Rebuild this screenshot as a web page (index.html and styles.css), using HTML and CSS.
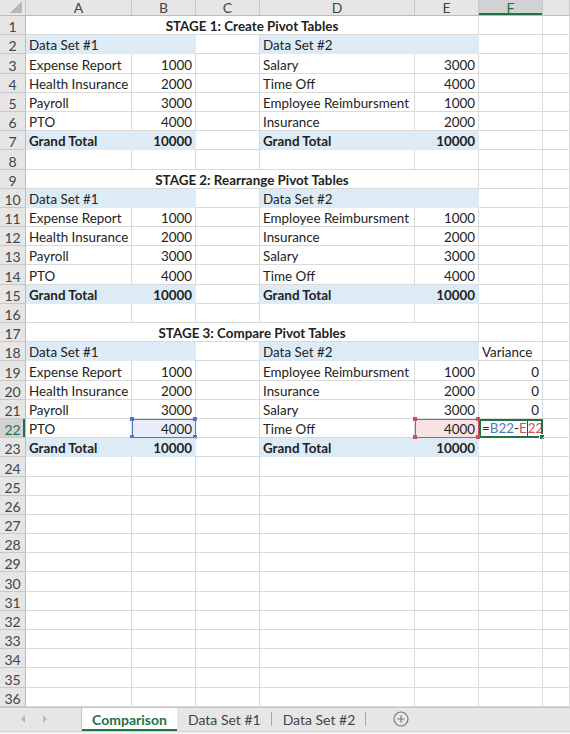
FILE: index.html
```html
<!DOCTYPE html>
<html lang="en">
<head>
    <meta charset="UTF-8">
    <meta name="viewport" content="width=device-width, initial-scale=1.0">
    <title>Comparison - Pivot Tables</title>
    <link rel="stylesheet" href="styles.css">
</head>
<body>
    <!-- worksheet grid -->
    <table class="sheet">
        <colgroup>
            <col class="c-rh">
            <col class="c-a">
            <col class="c-b">
            <col class="c-c">
            <col class="c-d">
            <col class="c-e">
            <col class="c-f">
            <col class="c-g">
        </colgroup>
        <thead>
            <tr>
                <th class="corner"><span class="tri"></span></th>
                <th>A</th>
                <th>B</th>
                <th>C</th>
                <th>D</th>
                <th>E</th>
                <th class="col-hl">F</th>
                <th></th>
            </tr>
        </thead>
        <tbody>
            <!-- stage 1 -->
            <tr><th>1</th><td colspan="5" class="title">STAGE 1: Create Pivot Tables</td><td></td><td></td></tr>
            <tr><th>2</th><td class="fill">Data Set #1</td><td class="fill"></td><td></td><td class="fill">Data Set #2</td><td class="fill"></td><td></td><td></td></tr>
            <tr><th>3</th><td>Expense Report</td><td class="num">1000</td><td></td><td>Salary</td><td class="num">3000</td><td></td><td></td></tr>
            <tr><th>4</th><td>Health Insurance</td><td class="num">2000</td><td></td><td>Time Off</td><td class="num">4000</td><td></td><td></td></tr>
            <tr><th>5</th><td>Payroll</td><td class="num">3000</td><td></td><td>Employee Reimbursment</td><td class="num">1000</td><td></td><td></td></tr>
            <tr><th>6</th><td>PTO</td><td class="num">4000</td><td></td><td>Insurance</td><td class="num">2000</td><td></td><td></td></tr>
            <tr><th>7</th><td class="fill b">Grand Total</td><td class="fill b num">10000</td><td></td><td class="fill b">Grand Total</td><td class="fill b num">10000</td><td></td><td></td></tr>
            <tr><th>8</th><td></td><td></td><td></td><td></td><td></td><td></td><td></td></tr>

            <!-- stage 2 -->
            <tr><th>9</th><td colspan="5" class="title">STAGE 2: Rearrange Pivot Tables</td><td></td><td></td></tr>
            <tr><th>10</th><td class="fill">Data Set #1</td><td class="fill"></td><td></td><td class="fill">Data Set #2</td><td class="fill"></td><td></td><td></td></tr>
            <tr><th>11</th><td>Expense Report</td><td class="num">1000</td><td></td><td>Employee Reimbursment</td><td class="num">1000</td><td></td><td></td></tr>
            <tr><th>12</th><td>Health Insurance</td><td class="num">2000</td><td></td><td>Insurance</td><td class="num">2000</td><td></td><td></td></tr>
            <tr><th>13</th><td>Payroll</td><td class="num">3000</td><td></td><td>Salary</td><td class="num">3000</td><td></td><td></td></tr>
            <tr><th>14</th><td>PTO</td><td class="num">4000</td><td></td><td>Time Off</td><td class="num">4000</td><td></td><td></td></tr>
            <tr><th>15</th><td class="fill b">Grand Total</td><td class="fill b num">10000</td><td></td><td class="fill b">Grand Total</td><td class="fill b num">10000</td><td></td><td></td></tr>
            <tr><th>16</th><td></td><td></td><td></td><td></td><td></td><td></td><td></td></tr>

            <!-- stage 3 -->
            <tr><th>17</th><td colspan="5" class="title">STAGE 3: Compare Pivot Tables</td><td></td><td></td></tr>
            <tr><th>18</th><td class="fill">Data Set #1</td><td class="fill"></td><td></td><td class="fill">Data Set #2</td><td class="fill"></td><td>Variance</td><td></td></tr>
            <tr><th>19</th><td>Expense Report</td><td class="num">1000</td><td></td><td>Employee Reimbursment</td><td class="num">1000</td><td class="num">0</td><td></td></tr>
            <tr><th>20</th><td>Health Insurance</td><td class="num">2000</td><td></td><td>Insurance</td><td class="num">2000</td><td class="num">0</td><td></td></tr>
            <tr><th>21</th><td>Payroll</td><td class="num">3000</td><td></td><td>Salary</td><td class="num">3000</td><td class="num">0</td><td></td></tr>
            <tr>
                <th class="row-hl">22</th>
                <td>PTO</td>
                <td class="num ref ref-blue">4000<i class="h tl"></i><i class="h tr"></i><i class="h bl"></i><i class="h br"></i></td>
                <td></td>
                <td>Time Off</td>
                <td class="num ref ref-red">4000<i class="h tl"></i><i class="h tr"></i><i class="h bl"></i><i class="h br"></i></td>
                <td class="edit">=<span class="blue">B22</span>-<span class="red">E</span><span class="caret"></span><span class="red">22</span><i class="fill-handle"></i></td>
                <td></td>
            </tr>
            <tr><th>23</th><td class="fill b">Grand Total</td><td class="fill b num">10000</td><td></td><td class="fill b">Grand Total</td><td class="fill b num">10000</td><td></td><td></td></tr>

            <!-- empty rows -->
            <tr><th>24</th><td></td><td></td><td></td><td></td><td></td><td></td><td></td></tr>
            <tr><th>25</th><td></td><td></td><td></td><td></td><td></td><td></td><td></td></tr>
            <tr><th>26</th><td></td><td></td><td></td><td></td><td></td><td></td><td></td></tr>
            <tr><th>27</th><td></td><td></td><td></td><td></td><td></td><td></td><td></td></tr>
            <tr><th>28</th><td></td><td></td><td></td><td></td><td></td><td></td><td></td></tr>
            <tr><th>29</th><td></td><td></td><td></td><td></td><td></td><td></td><td></td></tr>
            <tr><th>30</th><td></td><td></td><td></td><td></td><td></td><td></td><td></td></tr>
            <tr><th>31</th><td></td><td></td><td></td><td></td><td></td><td></td><td></td></tr>
            <tr><th>32</th><td></td><td></td><td></td><td></td><td></td><td></td><td></td></tr>
            <tr><th>33</th><td></td><td></td><td></td><td></td><td></td><td></td><td></td></tr>
            <tr><th>34</th><td></td><td></td><td></td><td></td><td></td><td></td><td></td></tr>
            <tr><th>35</th><td></td><td></td><td></td><td></td><td></td><td></td><td></td></tr>
            <tr><th>36</th><td></td><td></td><td></td><td></td><td></td><td></td><td></td></tr>
        </tbody>
    </table>

    <!-- sheet tabs -->
    <div class="tabs">
        <div class="nav">
            <svg width="6" height="8" viewBox="0 0 6 8"><path d="M5 0 L1 4 L5 8 Z" fill="#b9b9b9"/></svg>
            <svg width="6" height="8" viewBox="0 0 6 8"><path d="M1 0 L5 4 L1 8 Z" fill="#b9b9b9"/></svg>
        </div>
        <div class="tab active">Comparison</div>
        <div class="tab">Data Set #1</div>
        <span class="sep"></span>
        <div class="tab">Data Set #2</div>
        <span class="sep"></span>
        <div class="add">
            <svg width="16" height="16" viewBox="0 0 16 16">
                <circle cx="8" cy="8" r="7" fill="none" stroke="#7a7a7a" stroke-width="1.2"/>
                <path d="M8 4.5 V11.5 M4.5 8 H11.5" stroke="#7a7a7a" stroke-width="1.2"/>
            </svg>
        </div>
    </div>
    <div class="status"></div>
</body>
</html>
```

FILE: styles.css
```css
body {
    margin: 0;
    font-family: Lato, Calibri, "Noto Sans", sans-serif;
    font-size: 14px;
    color: #222;
    background: #fff;
    overflow: hidden;
}

/* grid */
.sheet {
    border-collapse: separate;
    border-spacing: 0;
    table-layout: fixed;
    width: 570px;
}
.c-rh { width: 26px; }
.c-a { width: 106px; }
.c-b { width: 64px; }
.c-c { width: 64px; }
.c-d { width: 155px; }
.c-e { width: 64px; }
.c-f { width: 64px; }
.c-g { width: 27px; }

.sheet td {
    height: 19.2px;
    box-sizing: border-box;
    padding: 0 3px;
    border-right: 1px solid #dadada;
    border-bottom: 1px solid #dadada;
    font-size: 13.4px;
    white-space: nowrap;
    overflow: visible;
    line-height: 15px;
    vertical-align: bottom;
    position: relative;
}
.sheet thead th {
    height: 16px;
    box-sizing: border-box;
    padding: 0;
    background: #e6e6e6;
    font-weight: normal;
    color: #444;
    border-right: 1px solid #c8c8c8;
    border-bottom: 1px solid #bcbcbc;
    line-height: 15px;
}
.sheet tbody th {
    padding: 0;
    background: #e6e6e6;
    font-weight: normal;
    color: #444;
    border-right: 1px solid #bcbcbc;
    border-bottom: 1px solid #c8c8c8;
    text-align: center;
    line-height: 15px;
    vertical-align: bottom;
}
.corner {
    position: relative;
}
.tri {
    position: absolute;
    right: 3px;
    bottom: 2px;
    width: 0;
    height: 0;
    border-left: 12px solid transparent;
    border-bottom: 12px solid #b7b7b7;
}
.sheet th.col-hl {
    background: #d2d2d2;
    color: #217346;
    box-shadow: inset 0 -2px #217346;
}
.sheet th.row-hl {
    background: #d2d2d2;
    color: #217346;
    box-shadow: inset -2px 0 #217346;
}

/* cell content */
.num { text-align: right; }
.b { font-weight: bold; }
.sheet td.fill {
    background: #ddebf7;
    border-color: #ddebf7;
}
.sheet td.title {
    text-align: center;
    font-weight: bold;
}

/* formula references */
.ref-blue {
    background: #e8eef9;
    outline: 1px solid #4a79cc;
    outline-offset: -1px;
}
.ref-red {
    background: #f9e2e3;
    outline: 1px solid #cf4f57;
    outline-offset: -1px;
    z-index: 1;
}
.h {
    position: absolute;
    width: 4px;
    height: 4px;
}
.ref-blue .h { background: #4a79cc; }
.ref-red .h { background: #cf4f57; }
.tl { left: -2px; top: -2px; }
.tr { right: -2px; top: -2px; }
.bl { left: -2px; bottom: -2px; }
.br { right: -2px; bottom: -2px; }

.edit {
    outline: 2px solid #217346;
    outline-offset: -2px;
}
.blue { color: #4a79cc; }
.red { color: #d0545c; }
.caret {
    display: inline-block;
    width: 0;
    height: 16px;
    border-left: 1px solid #444;
    vertical-align: -4px;
}
.fill-handle {
    position: absolute;
    right: -3px;
    bottom: -3px;
    width: 4px;
    height: 4px;
    background: #217346;
    border: 1px solid #fff;
}

/* sheet tabs */
.tabs {
    display: flex;
    align-items: stretch;
    height: 24px;
    box-sizing: border-box;
    background: #e6e6e6;
    border-top: 1px solid #c6c6c6;
    color: #444;
}
.nav {
    width: 81px;
    display: flex;
    align-items: center;
    gap: 16px;
    padding-left: 20px;
    box-sizing: border-box;
}
.tab {
    display: flex;
    align-items: center;
    padding: 0 10px 0 11px;
}
.tab.active {
    width: 96px;
    box-sizing: border-box;
    justify-content: center;
    padding: 0;
    background: #fff;
    color: #217346;
    font-weight: bold;
    border-left: 1px solid #c6c6c6;
    box-shadow: inset 0 -2px #217346;
}
.sep {
    width: 1px;
    height: 14px;
    align-self: center;
    background: #a8a8a8;
}
.add {
    display: flex;
    align-items: center;
    padding-left: 27px;
}
.status {
    height: 3px;
    background: #f3f3f3;
    border-top: 1px solid #d0d0d0;
}
```
